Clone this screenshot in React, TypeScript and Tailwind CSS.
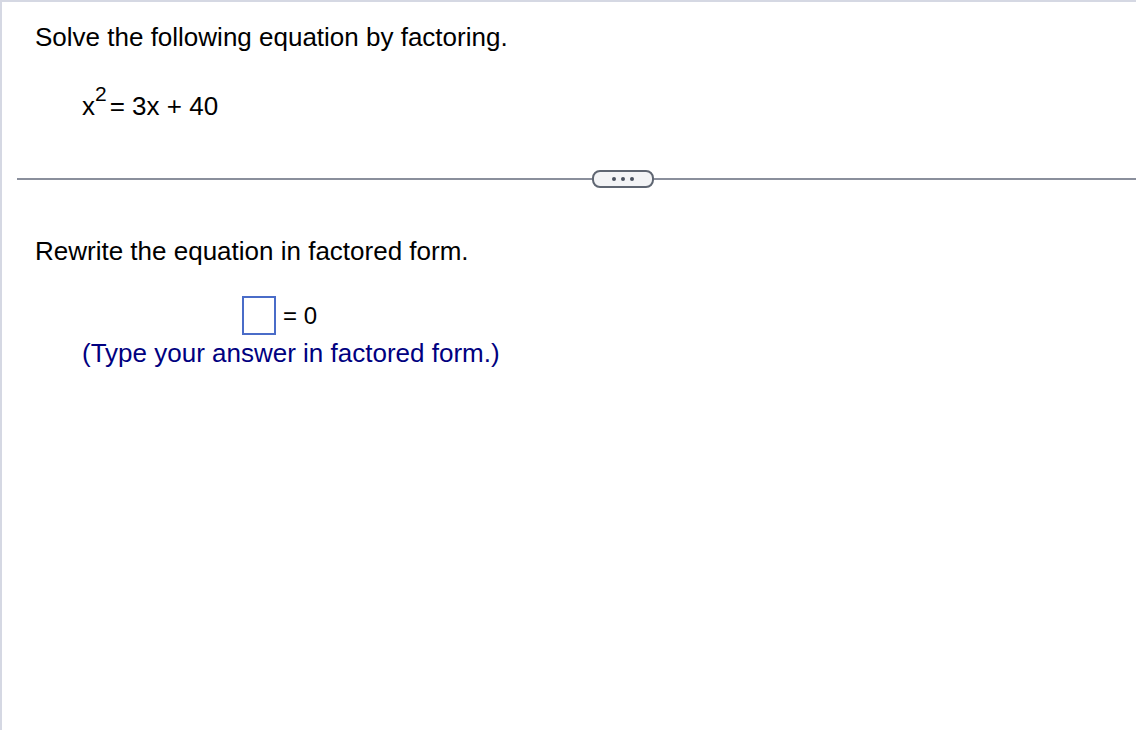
export default function App() {
  return (
    <div className="h-[730px] w-[1136px] overflow-hidden bg-white font-['Liberation_Sans',Arial,sans-serif] text-black">
      <div className="h-full border-l-2 border-t-2 border-[#d5d8e3]">
        <div className="pl-[33px] pt-[20px]">
          <p className="text-[26px] leading-[30px]">Solve the following equation by factoring.</p>
          <div className="mt-[39px] pl-[47px] text-[26px] leading-[30px]">
            <span>x</span>
            <span className="relative -top-[14px] text-[21px] leading-none">2</span>
            <span className="ml-[3px]">= 3x + 40</span>
          </div>
        </div>

        <div className="relative mt-[48px] ml-[15px] flex h-[20px] items-center">
          <div className="h-[2px] flex-1 bg-[#8a8f9c]" />
          <div className="absolute left-[575px] top-[1px] flex h-[18px] w-[62px] items-center justify-center gap-[5px] rounded-[8px] border-2 border-[#5f6672] bg-[#f3f4f6]">
            <span className="h-[4px] w-[4px] rounded-full bg-[#4b5260]" />
            <span className="h-[4px] w-[4px] rounded-full bg-[#4b5260]" />
            <span className="h-[4px] w-[4px] rounded-full bg-[#4b5260]" />
          </div>
        </div>

        <div className="pl-[33px] pt-[47px]">
          <p className="text-[26px] leading-[30px]">Rewrite the equation in factored form.</p>
          <div className="mt-[30px] flex items-center pl-[207px]">
            <div className="h-[39px] w-[34px] border-2 border-[#4a6cc8]" />
            <span className="ml-[7px] text-[24px] leading-[30px]">= 0</span>
          </div>
          <p className="mt-[3px] pl-[47px] text-[26px] leading-[30px] text-[#000080]">
            (Type your answer in factored form.)
          </p>
        </div>
      </div>
    </div>
  )
}
